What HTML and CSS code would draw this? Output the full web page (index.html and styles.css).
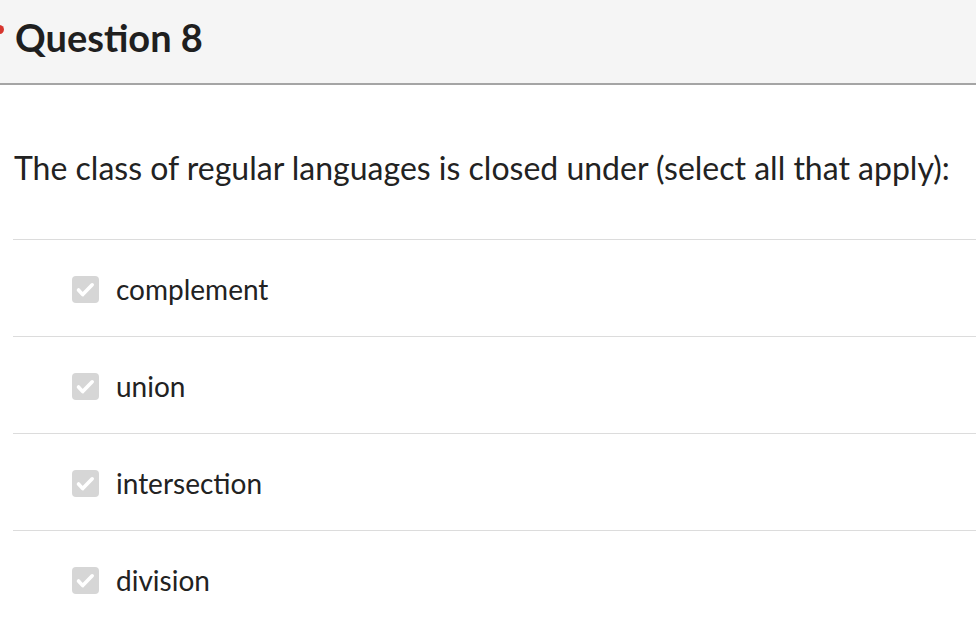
FILE: index.html
```html
<!DOCTYPE html>
<html>
<head>
<meta charset="utf-8">
<link rel="stylesheet" href="styles.css">
</head>
<body>
<div class="header">
  <span class="flag"></span>
  <h2 class="title">Question 8</h2>
</div>
<div class="content">
  <p class="question">The class of regular languages is closed under (select all that apply):</p>
  <div class="answers">
    <div class="answer"><span class="box"><svg viewBox="0 0 27 27" width="27" height="27"><path d="M6.5 14l4.2 4.6 9.5-9.8" fill="none" stroke="#fff" stroke-width="3.6" stroke-linecap="round" stroke-linejoin="round"/></svg></span><span class="label">complement</span></div>
    <div class="answer"><span class="box"><svg viewBox="0 0 27 27" width="27" height="27"><path d="M6.5 14l4.2 4.6 9.5-9.8" fill="none" stroke="#fff" stroke-width="3.6" stroke-linecap="round" stroke-linejoin="round"/></svg></span><span class="label">union</span></div>
    <div class="answer"><span class="box"><svg viewBox="0 0 27 27" width="27" height="27"><path d="M6.5 14l4.2 4.6 9.5-9.8" fill="none" stroke="#fff" stroke-width="3.6" stroke-linecap="round" stroke-linejoin="round"/></svg></span><span class="label">intersection</span></div>
    <div class="answer"><span class="box"><svg viewBox="0 0 27 27" width="27" height="27"><path d="M6.5 14l4.2 4.6 9.5-9.8" fill="none" stroke="#fff" stroke-width="3.6" stroke-linecap="round" stroke-linejoin="round"/></svg></span><span class="label">division</span></div>
  </div>
</div>
</body>
</html>
```
FILE: styles.css
```css
html, body {
  margin: 0;
  padding: 0;
  background: #fff;
  font-family: Lato, "Liberation Sans", sans-serif;
  color: #2d3b45;
  overflow: hidden;
}
.header {
  position: relative;
  height: 83px;
  background: #f5f5f5;
  border-bottom: 2px solid #a5a5a5;
  display: flex;
  align-items: center;
  padding-left: 15px;
}
.flag {
  position: absolute;
  left: -5px;
  top: 25px;
  width: 9px;
  height: 9px;
  border-radius: 50%;
  background: #d7362f;
}
.title {
  margin: 0;
  font-size: 38px;
  font-weight: 700;
  color: #1f1f1f;
  line-height: 1;
  margin-top: -10px;
}
.content {
  padding-left: 13px;
}
.question {
  margin: 0;
  padding-left: 1px;
  padding-top: 63px;
  height: 91px;
  font-size: 32px;
  line-height: 40px;
  color: #222;
}
.answer {
  display: flex;
  align-items: center;
  height: 96px;
  border-top: 1px solid #dcdcdc;
  padding-left: 59px;
}
.box {
  width: 27px;
  height: 27px;
  border-radius: 4px;
  background: #d6d6d6;
  display: flex;
  margin-top: 3px;
}
.label {
  margin-left: 17px;
  font-size: 28px;
  color: #222;
  margin-top: 2px;
}
```
